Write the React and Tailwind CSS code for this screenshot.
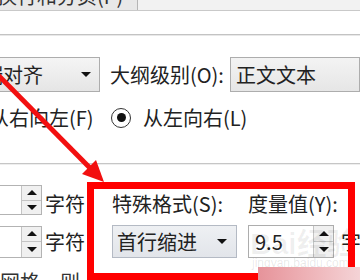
import React from "react";

const Arrow = () => (
  <span className="block h-0 w-0 border-x-[5px] border-t-[5px] border-x-transparent border-t-[#111]" />
);

const Spinner = () => (
  <div className="flex h-full w-[20px] flex-col border-l border-[#c4c4c4] bg-[#f0f0f0]">
    <div className="flex flex-1 items-center justify-center border-b border-[#c4c4c4]">
      <span className="block h-0 w-0 border-x-[5px] border-b-[5px] border-x-transparent border-b-[#111]" />
    </div>
    <div className="flex flex-1 items-center justify-center">
      <Arrow />
    </div>
  </div>
);

const SpinBox = () => (
  <div className="ml-[-40px] flex h-full w-[82px] justify-end border border-[#b3b3b3] bg-white">
    <Spinner />
  </div>
);

export default function App() {
  return (
    <div className="relative h-[280px] w-[360px] overflow-hidden bg-white font-['Noto_Sans_CJK_SC',sans-serif] text-[20px] leading-none text-[#222]">
      {/* tab strip */}
      <div className="flex h-[11px] border-b border-[#c9c9c9] bg-[#f2f2f2]">
        <div className="flex w-[138px] shrink-0 items-end overflow-hidden border-r border-[#b5b5b5] bg-[#e8e8e8] pb-[4px]">
          <span className="ml-[-3px] whitespace-nowrap text-[#333]">换行和分页(P)</span>
        </div>
        <div className="flex-1" />
      </div>
      <div className="h-[23px]" />
      <div className="h-[1px] bg-[#c3c3c3]" />
      <div className="h-[1px] bg-[#e8e8e8]" />

      {/* alignment / outline level */}
      <div className="mt-[21px] flex h-[35px]">
        <div className="ml-[-40px] flex w-[140px] shrink-0 items-center border border-[#adadad] bg-linear-to-b from-[#f5f5f5] to-[#e5e5e5] pl-[2px] pr-[8px]">
          <span className="whitespace-nowrap">两端对齐</span>
          <span className="ml-auto">
            <Arrow />
          </span>
        </div>
        <span className="ml-[10px] flex w-[120px] shrink-0 items-center whitespace-nowrap">大纲级别(O):</span>
        <div className="flex flex-1 items-center border border-[#adadad] bg-linear-to-b from-[#f3f3f3] to-[#e6e6e6] pl-[5px]">
          <span className="whitespace-nowrap">正文文本</span>
        </div>
      </div>

      {/* direction */}
      <div className="mt-[13px] flex h-[25px] items-center">
        <span className="ml-[-11px] w-[122px] shrink-0 whitespace-nowrap">从右向左(F)</span>
        <span className="flex h-[20px] w-[20px] shrink-0 items-center justify-center rounded-full border-[1.5px] border-[#333] bg-white">
          <span className="block h-[9px] w-[9px] rounded-full bg-[#111]" />
        </span>
        <span className="ml-[12px] whitespace-nowrap">从左向右(L)</span>
      </div>

      <div className="mt-[33px] h-[1px] bg-[#c6c6c6]" />
      <div className="h-[1px] bg-[#eeeeee]" />

      {/* indent row 1 */}
      <div className="mt-[20px] flex h-[30px] items-start">
        <div className="flex h-full w-[112px] shrink-0">
          <SpinBox />
          <span className="ml-[3px] mt-[9px] whitespace-nowrap">字符</span>
        </div>
        <span className="mt-[9px] w-[136px] shrink-0 whitespace-nowrap">特殊格式(S):</span>
        <span className="mt-[9px] whitespace-nowrap">度量值(Y):</span>
      </div>

      {/* indent row 2 */}
      <div className="mt-[10px] flex h-[33px] items-center">
        <div className="flex h-[32px] w-[112px] shrink-0 items-center">
          <SpinBox />
          <span className="ml-[3px] whitespace-nowrap">字符</span>
        </div>
        <div className="w-[136px] shrink-0">
          <div className="flex h-[33px] w-[125px] items-center border border-[#b4bac4] bg-linear-to-b from-[#eef0f3] to-[#e2e5ea] pl-[4px] pr-[9px]">
            <span className="whitespace-nowrap">首行缩进</span>
            <span className="ml-auto">
              <Arrow />
            </span>
          </div>
        </div>
        <div className="w-[93px] shrink-0">
          <div className="flex h-[33px] w-[86px] items-center border border-[#adadad] bg-white pl-[6px]">
            <span>9.5</span>
            <div className="ml-auto h-full">
              <Spinner />
            </div>
          </div>
        </div>
        <span className="whitespace-nowrap">字</span>
      </div>

      <div className="mt-[14px] whitespace-nowrap text-[#333]">网格，则</div>

      {/* watermark */}
      <div className="pointer-events-none absolute left-[250px] top-[226px] whitespace-nowrap font-['Liberation_Sans',sans-serif] text-[30px] font-bold text-black/[0.06]">
        Bai<span className="font-['Noto_Sans_CJK_SC',sans-serif]">经验</span>
      </div>
      <div className="pointer-events-none absolute left-[252px] top-[257px] whitespace-nowrap font-['Liberation_Sans',sans-serif] text-[12px] text-black/[0.1]">
        jingyan.baidu.com
      </div>

      {/* highlight box */}
      <div className="pointer-events-none absolute left-[87px] top-[182px] h-[98px] w-[268px] border-[7px] border-[#ff0000]" />

      {/* arrow */}
      <svg className="pointer-events-none absolute left-0 top-0" width="360" height="280" viewBox="0 0 360 280">
        <line x1="-3" y1="74" x2="91" y2="169" stroke="#f21010" strokeWidth="5" />
        <polygon points="104,182 82,174 96,160" fill="#f21010" />
      </svg>

      {/* corner band */}
      <div className="pointer-events-none absolute bottom-0 left-[258px] right-0 top-[267px] bg-linear-to-r from-[#e6939a] to-[#f4d3d6]" />
    </div>
  );
}
